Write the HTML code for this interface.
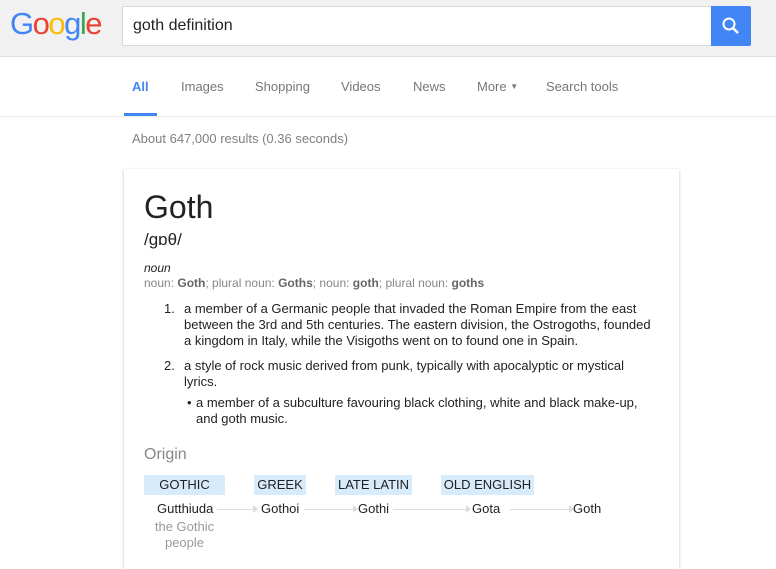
<!DOCTYPE html>
<html><head><meta charset="utf-8"><style>
*{margin:0;padding:0;box-sizing:border-box}
body{width:776px;height:561px;overflow:hidden;background:#fff;font-family:"Liberation Sans",Arial,sans-serif;position:relative}
.hdr{position:absolute;left:0;top:0;width:776px;height:57px;background:#f1f1f1;border-bottom:1px solid #e0e0e0}
.logo{position:absolute;left:10px;top:6px;font-size:31px;letter-spacing:-1.5px;font-family:"Liberation Sans",sans-serif}
.box{position:absolute;left:122px;top:6px;width:590px;height:40px;background:#fff;border:1px solid #d9d9d9;border-right:none;font-size:16px;padding:10px 0 0 10px;color:#222}
.btn{position:absolute;left:711px;top:6px;width:40px;height:40px;background:#4285f4;border-radius:0 2px 2px 0}
.tabs{position:absolute;top:79px;font-size:13px;color:#777}
.under{position:absolute;left:124px;top:113px;width:33px;height:3px;background:#4285f4}
.sep{position:absolute;left:0;top:116px;width:776px;height:1px;background:#ebebeb}
.res{position:absolute;left:132px;top:131px;font-size:13px;color:#808080}
.card{position:absolute;left:124px;top:169px;width:555px;height:400px;background:#fff;box-shadow:0 1px 3px rgba(0,0,0,.25)}
.a{position:absolute;white-space:nowrap}
.def{font-size:13px;color:#222;line-height:16px}
.tag{position:absolute;top:306px;height:20px;background:#d7ebfb;font-size:13px;color:#222;text-align:center;line-height:20px}
.w{position:absolute;top:332px;font-size:13px;color:#222}
.ar{position:absolute;top:340px;height:1px;background:#ddd}
.ar:after{content:"";position:absolute;right:-4px;top:-4px;border-left:5px solid #ddd;border-top:4px solid transparent;border-bottom:4px solid transparent}
</style></head><body>
<div class="hdr">
<div class="logo"><span style="color:#4285f4">G</span><span style="color:#ea4335">o</span><span style="color:#fbbc05">o</span><span style="color:#4285f4">g</span><span style="color:#34a853">l</span><span style="color:#ea4335">e</span></div>
<div class="box">goth definition</div>
<div class="btn"><svg width="40" height="40"><circle cx="18" cy="18" r="5.5" fill="none" stroke="#fff" stroke-width="2"/><path d="M22 22 L27 27" stroke="#fff" stroke-width="2.5"/></svg></div>
</div>
<div class="tabs" style="left:132px;color:#4285f4;font-weight:bold">All</div>
<div class="tabs" style="left:181px">Images</div>
<div class="tabs" style="left:255px">Shopping</div>
<div class="tabs" style="left:341px">Videos</div>
<div class="tabs" style="left:413px">News</div>
<div class="tabs" style="left:477px">More <span style="font-size:8px;position:relative;top:-2px">▼</span></div>
<div class="tabs" style="left:546px">Search tools</div>
<div class="under"></div><div class="sep"></div>
<div class="res">About 647,000 results (0.36 seconds)</div>
<div class="card">
<div class="a" style="left:20px;top:20px;font-size:32px;color:#222">Goth</div>
<div class="a" style="left:20px;top:61px;font-size:17px;color:#222">/ɡɒθ/</div>
<div class="a" style="left:20px;top:92px;font-size:12px;color:#222;font-style:italic">noun</div>
<div class="a" style="left:20px;top:107px;font-size:12px;color:#878787">noun: <b style="color:#666">Goth</b>; plural noun: <b style="color:#666">Goths</b>; noun: <b style="color:#666">goth</b>; plural noun: <b style="color:#666">goths</b></div>
<div class="a def" style="left:40px;top:132px">1.</div>
<div class="a def" style="left:60px;top:132px">a member of a Germanic people that invaded the Roman Empire from the east<br>between the 3rd and 5th centuries. The eastern division, the Ostrogoths, founded<br>a kingdom in Italy, while the Visigoths went on to found one in Spain.</div>
<div class="a def" style="left:40px;top:189px">2.</div>
<div class="a def" style="left:60px;top:189px">a style of rock music derived from punk, typically with apocalyptic or mystical<br>lyrics.</div>
<div class="a def" style="left:63px;top:226px">•</div>
<div class="a def" style="left:72px;top:226px">a member of a subculture favouring black clothing, white and black make-up,<br>and goth music.</div>
<div class="a" style="left:20px;top:277px;font-size:16px;color:#878787">Origin</div>
<div class="tag" style="left:20px;width:81px">GOTHIC</div>
<div class="tag" style="left:130px;width:52px">GREEK</div>
<div class="tag" style="left:211px;width:77px">LATE LATIN</div>
<div class="tag" style="left:317px;width:93px">OLD ENGLISH</div>
<div class="w" style="left:33px">Gutthiuda</div>
<div class="a" style="left:20px;top:350px;width:81px;text-align:center;font-size:13px;color:#999;line-height:16px;white-space:normal">the Gothic people</div>
<div class="ar" style="left:93px;width:37px"></div>
<div class="w" style="left:137px">Gothoi</div>
<div class="ar" style="left:180px;width:50px"></div>
<div class="w" style="left:234px">Gothi</div>
<div class="ar" style="left:269px;width:74px"></div>
<div class="w" style="left:348px">Gota</div>
<div class="ar" style="left:386px;width:60px"></div>
<div class="w" style="left:449px">Goth</div>
</div>
</body></html>
